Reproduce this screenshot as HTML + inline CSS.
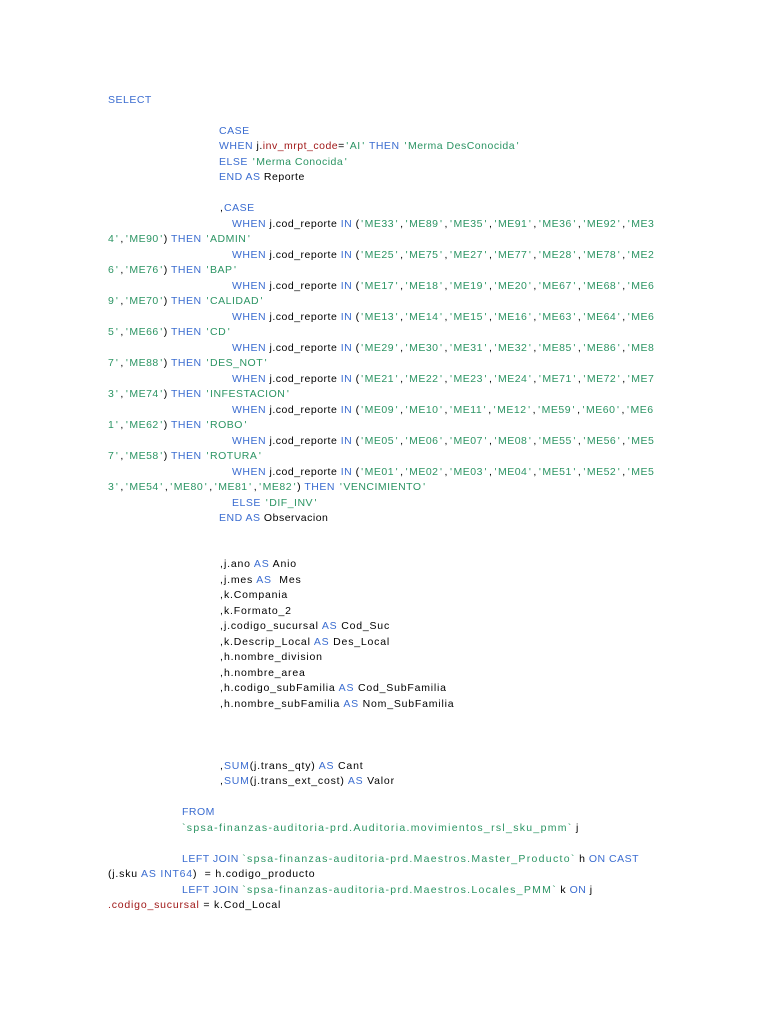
<!DOCTYPE html>
<html><head><meta charset="utf-8"><style>
body{margin:0;background:#fff;width:768px;height:1024px;position:relative;overflow:hidden;font-family:"Liberation Sans",sans-serif;font-size:10.5px;color:#000;letter-spacing:0.5px;}
.l{position:absolute;white-space:pre;line-height:15px;}
.k{color:#3a6cd0}.s{color:#2b9463}.r{color:#a01818}
.w{letter-spacing:1.3px}
.m{letter-spacing:0.8px}
i,b{font-style:normal;font-weight:normal;display:inline-block;width:5px;text-align:center;letter-spacing:0}
</style></head><body>
<div class="l" style="left:108px;top:93px"><span class="k">SELECT</span></div>
<div class="l" style="left:219px;top:124px"><span class="k">CASE</span></div>
<div class="l" style="left:219px;top:139px"><span class="k">WHEN</span> j.<span class="r">inv_mrpt_code</span>=<span class="s"><i>'</i>AI<i>'</i></span> <span class="k">THEN</span> <span class="s"><i>'</i>Merma DesConocida<i>'</i></span></div>
<div class="l" style="left:219px;top:155px"><span class="k">ELSE</span> <span class="s"><i>'</i>Merma Conocida<i>'</i></span></div>
<div class="l" style="left:219px;top:170px"><span class="k">END AS</span> Reporte</div>
<div class="l" style="left:219px;top:201px"><b>,</b><span class="k">CASE</span></div>

<div class="l" style="left:232px;top:217px"><span class="k">WHEN</span> j.cod_reporte <span class="k">IN</span> (<span class="s"><i>'</i>ME33<i>'</i></span><b>,</b><span class="s"><i>'</i>ME89<i>'</i></span><b>,</b><span class="s"><i>'</i>ME35<i>'</i></span><b>,</b><span class="s"><i>'</i>ME91<i>'</i></span><b>,</b><span class="s"><i>'</i>ME36<i>'</i></span><b>,</b><span class="s"><i>'</i>ME92<i>'</i></span><b>,</b><span class="s"><i>'</i>ME3</span></div>
<div class="l" style="left:108px;top:232px"><span class="s">4<i>'</i></span><b>,</b><span class="s"><i>'</i>ME90<i>'</i></span>) <span class="k">THEN</span> <span class="s"><i>'</i>ADMIN<i>'</i></span></div>
<div class="l" style="left:232px;top:248px"><span class="k">WHEN</span> j.cod_reporte <span class="k">IN</span> (<span class="s"><i>'</i>ME25<i>'</i></span><b>,</b><span class="s"><i>'</i>ME75<i>'</i></span><b>,</b><span class="s"><i>'</i>ME27<i>'</i></span><b>,</b><span class="s"><i>'</i>ME77<i>'</i></span><b>,</b><span class="s"><i>'</i>ME28<i>'</i></span><b>,</b><span class="s"><i>'</i>ME78<i>'</i></span><b>,</b><span class="s"><i>'</i>ME2</span></div>
<div class="l" style="left:108px;top:263px"><span class="s">6<i>'</i></span><b>,</b><span class="s"><i>'</i>ME76<i>'</i></span>) <span class="k">THEN</span> <span class="s"><i>'</i>BAP<i>'</i></span></div>
<div class="l" style="left:232px;top:279px"><span class="k">WHEN</span> j.cod_reporte <span class="k">IN</span> (<span class="s"><i>'</i>ME17<i>'</i></span><b>,</b><span class="s"><i>'</i>ME18<i>'</i></span><b>,</b><span class="s"><i>'</i>ME19<i>'</i></span><b>,</b><span class="s"><i>'</i>ME20<i>'</i></span><b>,</b><span class="s"><i>'</i>ME67<i>'</i></span><b>,</b><span class="s"><i>'</i>ME68<i>'</i></span><b>,</b><span class="s"><i>'</i>ME6</span></div>
<div class="l" style="left:108px;top:294px"><span class="s">9<i>'</i></span><b>,</b><span class="s"><i>'</i>ME70<i>'</i></span>) <span class="k">THEN</span> <span class="s"><i>'</i>CALIDAD<i>'</i></span></div>
<div class="l" style="left:232px;top:310px"><span class="k">WHEN</span> j.cod_reporte <span class="k">IN</span> (<span class="s"><i>'</i>ME13<i>'</i></span><b>,</b><span class="s"><i>'</i>ME14<i>'</i></span><b>,</b><span class="s"><i>'</i>ME15<i>'</i></span><b>,</b><span class="s"><i>'</i>ME16<i>'</i></span><b>,</b><span class="s"><i>'</i>ME63<i>'</i></span><b>,</b><span class="s"><i>'</i>ME64<i>'</i></span><b>,</b><span class="s"><i>'</i>ME6</span></div>
<div class="l" style="left:108px;top:325px"><span class="s">5<i>'</i></span><b>,</b><span class="s"><i>'</i>ME66<i>'</i></span>) <span class="k">THEN</span> <span class="s"><i>'</i>CD<i>'</i></span></div>
<div class="l" style="left:232px;top:341px"><span class="k">WHEN</span> j.cod_reporte <span class="k">IN</span> (<span class="s"><i>'</i>ME29<i>'</i></span><b>,</b><span class="s"><i>'</i>ME30<i>'</i></span><b>,</b><span class="s"><i>'</i>ME31<i>'</i></span><b>,</b><span class="s"><i>'</i>ME32<i>'</i></span><b>,</b><span class="s"><i>'</i>ME85<i>'</i></span><b>,</b><span class="s"><i>'</i>ME86<i>'</i></span><b>,</b><span class="s"><i>'</i>ME8</span></div>
<div class="l" style="left:108px;top:356px"><span class="s">7<i>'</i></span><b>,</b><span class="s"><i>'</i>ME88<i>'</i></span>) <span class="k">THEN</span> <span class="s"><i>'</i>DES_NOT<i>'</i></span></div>
<div class="l" style="left:232px;top:372px"><span class="k">WHEN</span> j.cod_reporte <span class="k">IN</span> (<span class="s"><i>'</i>ME21<i>'</i></span><b>,</b><span class="s"><i>'</i>ME22<i>'</i></span><b>,</b><span class="s"><i>'</i>ME23<i>'</i></span><b>,</b><span class="s"><i>'</i>ME24<i>'</i></span><b>,</b><span class="s"><i>'</i>ME71<i>'</i></span><b>,</b><span class="s"><i>'</i>ME72<i>'</i></span><b>,</b><span class="s"><i>'</i>ME7</span></div>
<div class="l" style="left:108px;top:387px"><span class="s">3<i>'</i></span><b>,</b><span class="s"><i>'</i>ME74<i>'</i></span>) <span class="k">THEN</span> <span class="s"><i>'</i>INFESTACION<i>'</i></span></div>
<div class="l" style="left:232px;top:403px"><span class="k">WHEN</span> j.cod_reporte <span class="k">IN</span> (<span class="s"><i>'</i>ME09<i>'</i></span><b>,</b><span class="s"><i>'</i>ME10<i>'</i></span><b>,</b><span class="s"><i>'</i>ME11<i>'</i></span><b>,</b><span class="s"><i>'</i>ME12<i>'</i></span><b>,</b><span class="s"><i>'</i>ME59<i>'</i></span><b>,</b><span class="s"><i>'</i>ME60<i>'</i></span><b>,</b><span class="s"><i>'</i>ME6</span></div>
<div class="l" style="left:108px;top:418px"><span class="s">1<i>'</i></span><b>,</b><span class="s"><i>'</i>ME62<i>'</i></span>) <span class="k">THEN</span> <span class="s"><i>'</i>ROBO<i>'</i></span></div>
<div class="l" style="left:232px;top:434px"><span class="k">WHEN</span> j.cod_reporte <span class="k">IN</span> (<span class="s"><i>'</i>ME05<i>'</i></span><b>,</b><span class="s"><i>'</i>ME06<i>'</i></span><b>,</b><span class="s"><i>'</i>ME07<i>'</i></span><b>,</b><span class="s"><i>'</i>ME08<i>'</i></span><b>,</b><span class="s"><i>'</i>ME55<i>'</i></span><b>,</b><span class="s"><i>'</i>ME56<i>'</i></span><b>,</b><span class="s"><i>'</i>ME5</span></div>
<div class="l" style="left:108px;top:449px"><span class="s">7<i>'</i></span><b>,</b><span class="s"><i>'</i>ME58<i>'</i></span>) <span class="k">THEN</span> <span class="s"><i>'</i>ROTURA<i>'</i></span></div>
<div class="l" style="left:232px;top:465px"><span class="k">WHEN</span> j.cod_reporte <span class="k">IN</span> (<span class="s"><i>'</i>ME01<i>'</i></span><b>,</b><span class="s"><i>'</i>ME02<i>'</i></span><b>,</b><span class="s"><i>'</i>ME03<i>'</i></span><b>,</b><span class="s"><i>'</i>ME04<i>'</i></span><b>,</b><span class="s"><i>'</i>ME51<i>'</i></span><b>,</b><span class="s"><i>'</i>ME52<i>'</i></span><b>,</b><span class="s"><i>'</i>ME5</span></div>
<div class="l" style="left:108px;top:480px"><span class="s">3<i>'</i></span><b>,</b><span class="s"><i>'</i>ME54<i>'</i></span><b>,</b><span class="s"><i>'</i>ME80<i>'</i></span><b>,</b><span class="s"><i>'</i>ME81<i>'</i></span><b>,</b><span class="s"><i>'</i>ME82<i>'</i></span>) <span class="k">THEN</span> <span class="s"><i>'</i>VENCIMIENTO<i>'</i></span></div>
<div class="l" style="left:232px;top:496px"><span class="k">ELSE</span> <span class="s"><i>'</i>DIF_INV<i>'</i></span></div>
<div class="l" style="left:219px;top:511px"><span class="k">END AS</span> Observacion</div>

<div class="l m" style="left:219px;top:557px"><b>,</b>j.ano <span class="k">AS</span> Anio</div>
<div class="l m" style="left:219px;top:573px"><b>,</b>j.mes <span class="k">AS</span>  Mes</div>
<div class="l m" style="left:219px;top:588px"><b>,</b>k.Compania</div>
<div class="l m" style="left:219px;top:604px"><b>,</b>k.Formato_2</div>
<div class="l m" style="left:219px;top:619px"><b>,</b>j.codigo_sucursal <span class="k">AS</span> Cod_Suc</div>
<div class="l m" style="left:219px;top:635px"><b>,</b>k.Descrip_Local <span class="k">AS</span> Des_Local</div>
<div class="l m" style="left:219px;top:650px"><b>,</b>h.nombre_division</div>
<div class="l m" style="left:219px;top:666px"><b>,</b>h.nombre_area</div>
<div class="l m" style="left:219px;top:681px"><b>,</b>h.codigo_subFamilia <span class="k">AS</span> Cod_SubFamilia</div>
<div class="l m" style="left:219px;top:697px"><b>,</b>h.nombre_subFamilia <span class="k">AS</span> Nom_SubFamilia</div>

<div class="l m" style="left:219px;top:759px"><b>,</b><span class="k">SUM</span>(j.trans_qty) <span class="k">AS</span> Cant</div>
<div class="l m" style="left:219px;top:774px"><b>,</b><span class="k">SUM</span>(j.trans_ext_cost) <span class="k">AS</span> Valor</div>

<div class="l" style="left:182px;top:805px"><span class="k">FROM</span></div>
<div class="l" style="left:182px;top:821px"><span class="s w">`spsa-finanzas-auditoria-prd.Auditoria.movimientos_rsl_sku_pmm`</span> j</div>
<div class="l" style="left:182px;top:852px"><span class="k">LEFT JOIN</span> <span class="s w">`spsa-finanzas-auditoria-prd.Maestros.Master_Producto`</span> h <span class="k">ON CAST</span></div>
<div class="l m" style="left:108px;top:867px">(j.sku <span class="k">AS INT64</span>)  = h.codigo_producto</div>
<div class="l" style="left:182px;top:883px"><span class="k">LEFT JOIN</span> <span class="s w">`spsa-finanzas-auditoria-prd.Maestros.Locales_PMM`</span> k <span class="k">ON</span> j</div>
<div class="l m" style="left:108px;top:898px"><span class="r">.codigo_sucursal</span> = k.Cod_Local</div>
</body></html>
